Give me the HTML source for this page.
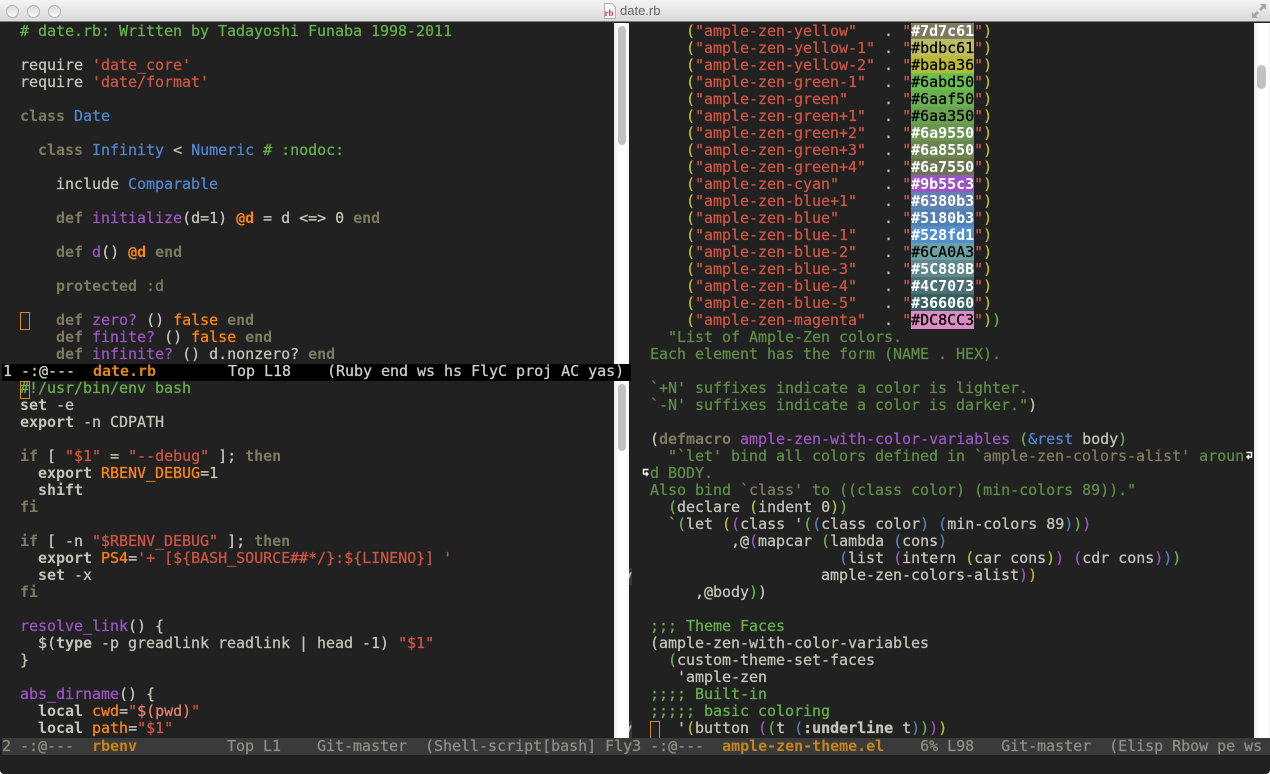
<!DOCTYPE html>
<html><head><meta charset="utf-8"><title>date.rb</title>
<style>
html,body{margin:0;padding:0;background:#fff;width:1270px;height:774px;overflow:hidden}
#w{position:relative;width:1270px;height:774px;background:#212121;overflow:hidden;border-radius:0 0 4px 4px}
#t{position:absolute;left:0;top:0;width:1270px;height:21px;background:linear-gradient(#f4f4f4,#d9d9d9);border-bottom:1px solid #7d7d7d}
.l{position:absolute;top:5px;width:11px;height:11px;border-radius:50%;background:linear-gradient(#dcdcdc,#f8f8f8);border:1px solid #b0b0b0}
#tt{position:absolute;left:620px;top:3px;font:13px/16px "Liberation Sans",sans-serif;color:#666}
pre{position:absolute;margin:0;font:15px/17px "DejaVu Sans Mono","Liberation Mono",monospace;color:#c4c4ba;overflow:hidden;letter-spacing:-.03px;-webkit-text-stroke:.25px}
.sb{position:absolute;background:linear-gradient(90deg,#eaeaea,#fff 30%,#fff 80%,#f4f4f4)}
.th{position:absolute;background:#c2c2c2;border-radius:5px}
.ml{position:absolute;height:17px;font:15px/17px "DejaVu Sans Mono","Liberation Mono",monospace;white-space:pre;letter-spacing:-.03px;-webkit-text-stroke:.25px}
.cur{position:absolute;width:8px;height:16px;border:1px solid #d98a1c;box-sizing:content-box}
.k{color:#7d7c61;font-weight:bold;-webkit-text-stroke:0}.b{font-weight:bold;-webkit-text-stroke:0}.y{color:#4f86cf}.f{color:#9b55c3}.s{color:#cd5542}.c{color:#66b04b}.o{color:#ff8512}.O{color:#ff8512;font-weight:bold;-webkit-text-stroke:0}.d{color:#5f8d46}.g{color:#7d7c61}
.p{color:#baba36}.q{color:#6aaf50}.r{color:#5180b3}.v{color:#9b55c3}.m{color:#e08a10;font-weight:bold;-webkit-text-stroke:0}.e{color:#e8806c}
.W{color:#fff;font-weight:bold;-webkit-text-stroke:0}.K{color:#000}
</style></head><body><div id="w">
<div id="t"></div>
<div class="l" style="left:6px"></div><div class="l" style="left:27px"></div><div class="l" style="left:48px"></div>
<svg style="position:absolute;left:603px;top:3px" width="13" height="16" viewBox="0 0 13 16"><path d="M1.5.5H9L12.5 4V15.5H1.5Z" fill="#f8f8f8" stroke="#b0b0b0"/><text x="1.5" y="13" font-family="Liberation Serif,serif" font-size="9" font-weight="bold" fill="#cc3a3a">rb</text></svg>
<div id="tt">date.rb</div>
<svg style="position:absolute;left:1251px;top:3px" width="16" height="16" viewBox="0 0 16 16"><path d="M9 1H15V7L13 5L10 8L8 6L11 3Z M1 9L3 11L6 8L8 10L5 13L7 15H1Z" fill="#a6a6a6"/></svg>

<pre style="left:2px;top:23px;width:612px;height:341px">  <span class="c"># date.rb: Written by Tadayoshi Funaba 1998-2011</span>

  require <span class="s">'date_core'</span>
  require <span class="s">'date/format'</span>

  <span class="k">class</span> <span class="y">Date</span>

    <span class="k">class</span> <span class="y">Infinity</span> &lt; <span class="y">Numeric</span> <span class="c"># :nodoc:</span>

      include <span class="y">Comparable</span>

      <span class="k">def</span> <span class="f">initialize</span>(d=1) <span class="O">@d</span> = d &lt;=&gt; 0 <span class="k">end</span>

      <span class="k">def</span> <span class="f">d</span>() <span class="O">@d</span> <span class="k">end</span>

      <span class="k">protected</span> <span class="g">:d</span>

      <span class="k">def</span> <span class="f">zero?</span> () <span class="o">false</span> <span class="k">end</span>
      <span class="k">def</span> <span class="f">finite?</span> () <span class="o">false</span> <span class="k">end</span>
      <span class="k">def</span> <span class="f">infinite?</span> () d.nonzero? <span class="k">end</span></pre>

<pre style="left:2px;top:380px;width:612px;height:358px">  <span class="c">#!/usr/bin/env bash</span>
  <span class="b">set</span> -e
  <span class="b">export</span> -n CDPATH

  <span class="k">if</span> [ <span class="s">"$1"</span> = <span class="s">"--debug"</span> ]; <span class="k">then</span>
    <span class="b">export</span> <span class="o">RBENV_DEBUG</span>=1
    <span class="b">shift</span>
  <span class="k">fi</span>

  <span class="k">if</span> [ -n <span class="s">"$RBENV_DEBUG"</span> ]; <span class="k">then</span>
    <span class="b">export</span> <span class="o">PS4</span>=<span class="s">'+ [${BASH_SOURCE##*/}:${LINENO}] '</span>
    <span class="b">set</span> -x
  <span class="k">fi</span>

  <span class="f">resolve_link</span>() {
    $(<span class="b">type</span> -p greadlink readlink | head -1) <span class="s">"$1"</span>
  }

  <span class="f">abs_dirname</span>() {
    <span class="b">local</span> <span class="o">cwd</span>=<span class="s">"</span><span class="e">$(pwd)</span><span class="s">"</span>
    <span class="b">local</span> <span class="o">path</span>=<span class="s">"$1"</span></pre>

<pre style="left:632px;top:23px;width:622px;height:715px">      <span class="p">(</span><span class="s">"ample-zen-yellow"</span>   . <span class="s">"</span><span class="W" style="background:#7d7c61">#7d7c61</span><span class="s">"</span><span class="p">)</span>
      <span class="p">(</span><span class="s">"ample-zen-yellow-1"</span> . <span class="s">"</span><span class="K" style="background:#bdbc61">#bdbc61</span><span class="s">"</span><span class="p">)</span>
      <span class="p">(</span><span class="s">"ample-zen-yellow-2"</span> . <span class="s">"</span><span class="K" style="background:#baba36">#baba36</span><span class="s">"</span><span class="p">)</span>
      <span class="p">(</span><span class="s">"ample-zen-green-1"</span>  . <span class="s">"</span><span class="K" style="background:#6abd50">#6abd50</span><span class="s">"</span><span class="p">)</span>
      <span class="p">(</span><span class="s">"ample-zen-green"</span>    . <span class="s">"</span><span class="K" style="background:#6aaf50">#6aaf50</span><span class="s">"</span><span class="p">)</span>
      <span class="p">(</span><span class="s">"ample-zen-green+1"</span>  . <span class="s">"</span><span class="K" style="background:#6aa350">#6aa350</span><span class="s">"</span><span class="p">)</span>
      <span class="p">(</span><span class="s">"ample-zen-green+2"</span>  . <span class="s">"</span><span class="W" style="background:#6a9550">#6a9550</span><span class="s">"</span><span class="p">)</span>
      <span class="p">(</span><span class="s">"ample-zen-green+3"</span>  . <span class="s">"</span><span class="W" style="background:#6a8550">#6a8550</span><span class="s">"</span><span class="p">)</span>
      <span class="p">(</span><span class="s">"ample-zen-green+4"</span>  . <span class="s">"</span><span class="W" style="background:#6a7550">#6a7550</span><span class="s">"</span><span class="p">)</span>
      <span class="p">(</span><span class="s">"ample-zen-cyan"</span>     . <span class="s">"</span><span class="W" style="background:#9b55c3">#9b55c3</span><span class="s">"</span><span class="p">)</span>
      <span class="p">(</span><span class="s">"ample-zen-blue+1"</span>   . <span class="s">"</span><span class="W" style="background:#6380b3">#6380b3</span><span class="s">"</span><span class="p">)</span>
      <span class="p">(</span><span class="s">"ample-zen-blue"</span>     . <span class="s">"</span><span class="W" style="background:#5180b3">#5180b3</span><span class="s">"</span><span class="p">)</span>
      <span class="p">(</span><span class="s">"ample-zen-blue-1"</span>   . <span class="s">"</span><span class="W" style="background:#528fd1">#528fd1</span><span class="s">"</span><span class="p">)</span>
      <span class="p">(</span><span class="s">"ample-zen-blue-2"</span>   . <span class="s">"</span><span class="K" style="background:#6CA0A3">#6CA0A3</span><span class="s">"</span><span class="p">)</span>
      <span class="p">(</span><span class="s">"ample-zen-blue-3"</span>   . <span class="s">"</span><span class="W" style="background:#5C888B">#5C888B</span><span class="s">"</span><span class="p">)</span>
      <span class="p">(</span><span class="s">"ample-zen-blue-4"</span>   . <span class="s">"</span><span class="W" style="background:#4C7073">#4C7073</span><span class="s">"</span><span class="p">)</span>
      <span class="p">(</span><span class="s">"ample-zen-blue-5"</span>   . <span class="s">"</span><span class="W" style="background:#366060">#366060</span><span class="s">"</span><span class="p">)</span>
      <span class="p">(</span><span class="s">"ample-zen-magenta"</span>  . <span class="s">"</span><span class="K" style="background:#DC8CC3">#DC8CC3</span><span class="s">"</span><span class="p">)</span><span class="q">)</span>
    <span class="d">"List of Ample-Zen colors.</span>
  <span class="d">Each element has the form (NAME . HEX).</span>

  <span class="d">`+N' suffixes indicate a color is lighter.</span>
  <span class="d">`-N' suffixes indicate a color is darker."</span>)

  (<span class="k">defmacro</span> <span class="f">ample-zen-with-color-variables</span> <span class="q">(</span><span class="y">&amp;rest</span> body<span class="q">)</span>
    <span class="d">"`let' bind all colors defined in `</span><span class="g">ample-zen-colors-alist</span><span class="d">' aroun</span>
  <span class="d">d BODY.</span>
  <span class="d">Also bind `</span><span class="g">class</span><span class="d">' to ((class color) (min-colors 89))."</span>
    <span class="q">(</span>declare <span class="p">(</span>indent 0<span class="p">)</span><span class="q">)</span>
    <span class="q">`(</span>let <span class="p">(</span><span class="v">(</span>class '<span class="q">(</span><span class="r">(</span>class color<span class="r">)</span> <span class="r">(</span>min-colors 89<span class="r">)</span><span class="q">)</span><span class="v">)</span>
           ,@<span class="v">(</span>mapcar <span class="q">(</span>lambda <span class="r">(</span>cons<span class="r">)</span>
                       <span class="r">(</span>list <span class="v">(</span>intern <span class="p">(</span>car cons<span class="p">)</span><span class="v">)</span> <span class="v">(</span>cdr cons<span class="v">)</span><span class="r">)</span><span class="q">)</span>
                     ample-zen-colors-alist<span class="v">)</span><span class="p">)</span>
       ,@body<span class="q">)</span>)

  <span class="c">;;; Theme Faces</span>
  (ample-zen-with-color-variables
    <span class="q">(</span>custom-theme-set-faces
     'ample-zen
  <span class="c">;;;; Built-in</span>
  <span class="c">;;;;; basic coloring</span>
     '<span class="p">(</span>button <span class="v">(</span><span class="q">(</span>t <span class="r">(</span><b>:underline</b> t<span class="r">)</span><span class="q">)</span><span class="v">)</span><span class="p">)</span></pre>

<div class="sb" style="left:614px;top:23px;width:15px;height:341px"></div>
<div class="th" style="left:618px;top:26px;width:8px;height:119px"></div>
<div class="sb" style="left:614px;top:381px;width:15px;height:357px"></div>
<div class="th" style="left:618px;top:384px;width:8px;height:67px"></div>
<div class="sb" style="left:1254px;top:23px;width:16px;height:715px"></div>
<div class="th" style="left:1257px;top:65px;width:9px;height:24px"></div>

<div style="position:absolute;left:629px;top:568px;width:3px;height:17px;background:#3a3a3a"></div>
<div style="position:absolute;left:629px;top:721px;width:3px;height:17px;background:#3a3a3a"></div>
<pre style="left:629px;top:568px;width:3px;height:17px;color:#c8c8c0"><span style="margin-left:-6px">y</span></pre>
<pre style="left:629px;top:721px;width:3px;height:17px;color:#c8c8c0"><span style="margin-left:-6px">y</span></pre>

<svg style="position:absolute;left:1245px;top:451px" width="8" height="11" viewBox="0 0 8 11"><path d="M1.5 1.5H6.5V6H2.5M4 4L2 6L4 8" fill="none" stroke="#fff" stroke-width="1.4"/></svg>
<svg style="position:absolute;left:642px;top:468px" width="8" height="11" viewBox="0 0 8 11"><path d="M6.5 1.5H1.5V6H5.5M4 4L6 6L4 8" fill="none" stroke="#fff" stroke-width="1.4"/></svg>

<div class="cur" style="left:20px;top:312px"></div>
<div class="cur" style="left:20px;top:381px"></div>
<div class="cur" style="left:650px;top:721px"></div>

<div class="ml" style="left:2px;top:364px;width:628px;padding-left:1px;line-height:15px;background:#000;color:#d0d0c8">1 -:@---  <span class="m">date.rb</span>        Top L18    (Ruby end ws hs FlyC proj AC yas)</div>
<div class="ml" style="left:2px;top:738px;width:1268px;background:#3a3a3a;color:#8e8e86">2 -:@---  <span class="m" style="color:#c8841c">rbenv</span>          Top L1    Git-master  (Shell-script[bash] Fly3 -:@---  <span class="m" style="color:#c8841c">ample-zen-theme.el</span>    6% L98   Git-master  (Elisp Rbow pe ws</div>
</div></body></html>
